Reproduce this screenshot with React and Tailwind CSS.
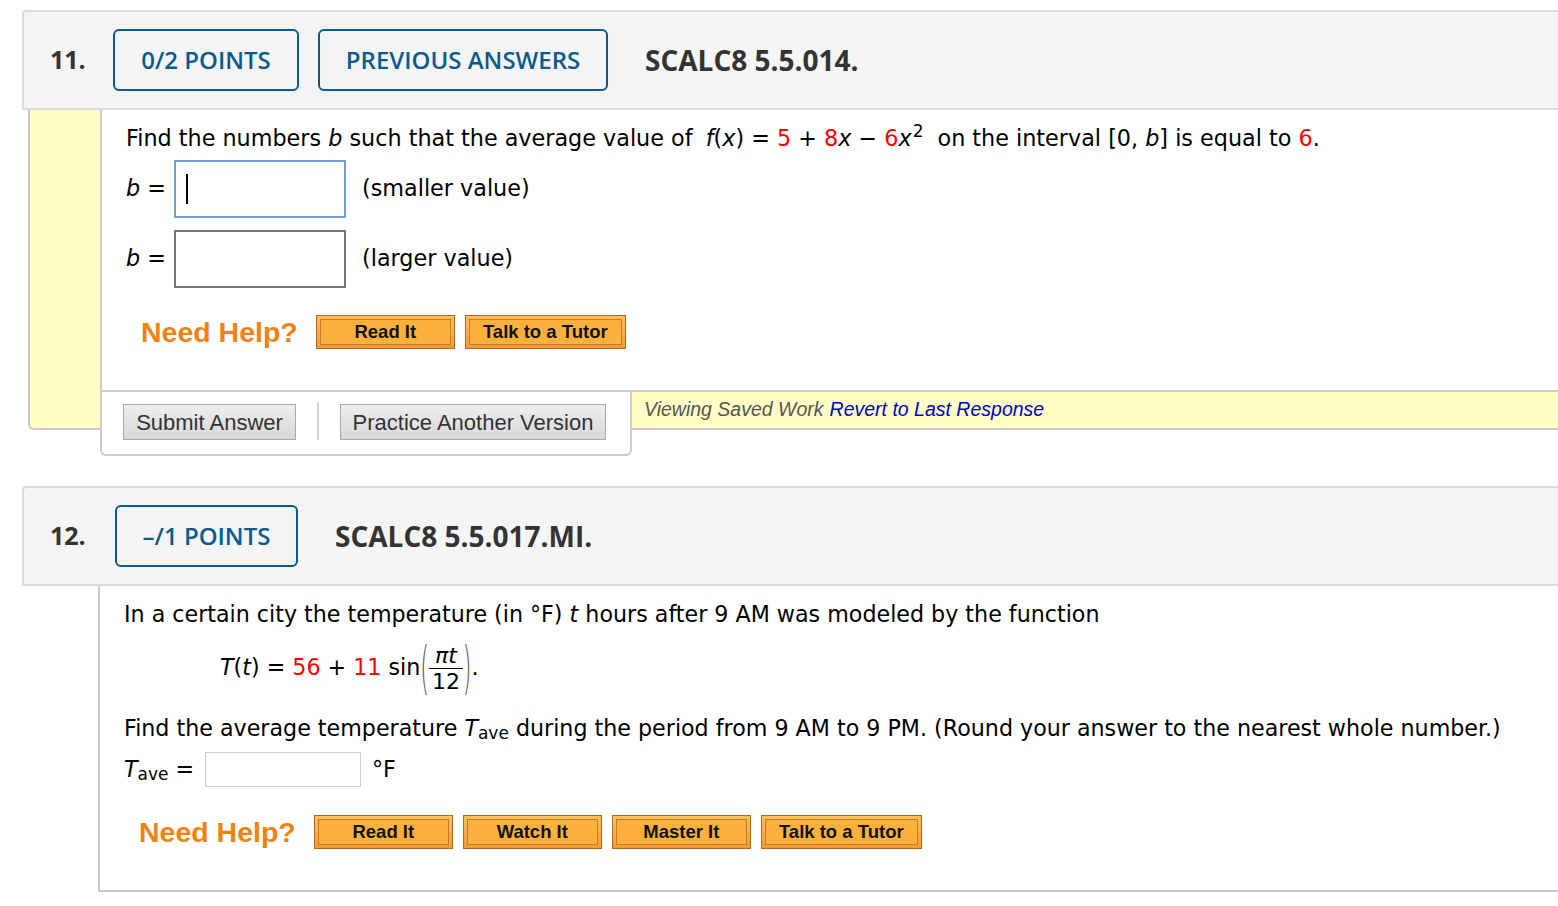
import React from "react";

export default function App() {
  return (
    <div className="min-h-screen bg-white overflow-hidden pt-[10px] text-black antialiased">
      {/* Question 11 */}
      <section className="ml-[22px] w-[1600px]">
        <Header
          num="11."
          numWidth="w-[63px]"
          badges={[
            { text: "0/2 POINTS", w: "w-[186px]" },
            { text: "PREVIOUS ANSWERS", w: "w-[290px]" },
          ]}
          code="SCALC8 5.5.014."
        />
        <div className="ml-[6px] bg-[#ffffc6] border-l-2 border-b-2 border-[#c9c9c9] rounded-bl-[6px]">
          <div className="ml-[70px] bg-white border-l-2 border-b-2 border-[#cccccc] pl-[24px] pt-[14px] pb-[41px] font-['DejaVu_Sans',Verdana,sans-serif] text-[22.3px]">
            <p className="leading-[28px]">
              Find the numbers <i>b</i> such that the average value of{" "}
              <span className="ml-[6px]">
                <i>f</i>(<i>x</i>) = <Red>5</Red> + <Red>8</Red>
                <i>x</i> − <Red>6</Red>
                <i>x</i>
                <sup className="text-[17px] ml-[1px] relative -top-[9px]">2</sup>
              </span>
              <span className="ml-[14px]">
                on the interval [0, <i>b</i>] is equal to <Red>6</Red>.
              </span>
            </p>
            <div className="mt-[8px] flex items-center">
              <span className="w-[48px]">
                <i>b</i> =
              </span>
              <div className="w-[172px] h-[58px] border-2 border-[#6f9fd0] flex items-center pl-[10px]">
                <span className="w-[2px] h-[30px] bg-black" />
              </div>
              <span className="ml-[16px]">(smaller value)</span>
            </div>
            <div className="mt-[12px] flex items-center">
              <span className="w-[48px]">
                <i>b</i> =
              </span>
              <div className="w-[172px] h-[58px] border-2 border-[#777777]" />
              <span className="ml-[16px]">(larger value)</span>
            </div>
            <NeedHelp items={["Read It", "Talk to a Tutor"]} className="mt-[27px] ml-[15px]" />
          </div>

          <div className="flex items-start">
            <div className="ml-[70px] w-[532px] h-[64px] -mb-[28px] bg-white border-x-2 border-b-2 border-[#cccccc] rounded-b-[6px] flex items-start pt-[12px] pl-[21px] font-['Liberation_Sans',Arial,sans-serif]">
              <GrayButton w="w-[173px]">Submit Answer</GrayButton>
              <span className="mx-[21px] mt-[-2px] w-[2px] h-[38px] bg-[#d4d4d4]" />
              <GrayButton w="w-[266px]">Practice Another Version</GrayButton>
            </div>
            <div className="h-[36px] flex items-center pl-[12px] font-['Liberation_Sans',Arial,sans-serif] italic text-[19.5px]">
              <span className="text-[#555555]">Viewing Saved Work</span>
              <span className="ml-[6px] text-[#0000c8]">Revert to Last Response</span>
            </div>
          </div>
        </div>
      </section>

      {/* Question 12 */}
      <section className="ml-[22px] w-[1600px] mt-[56px]">
        <Header
          num="12."
          numWidth="w-[65px]"
          badges={[{ text: "–/1 POINTS", w: "w-[183px]" }]}
          code="SCALC8 5.5.017.MI."
        />
        <div className="ml-[76px] bg-white border-l-2 border-b-2 border-[#cccccc] pl-[24px] pt-[14px] pb-[41px] font-['DejaVu_Sans',Verdana,sans-serif] text-[22.2px]">
          <p className="leading-[28px]">
            In a certain city the temperature (in °F) <i>t</i> hours after 9 AM was modeled by the
            function
          </p>
          <div className="mt-[12px] h-[56px] ml-[96px] flex items-center">
            <span>
              <i>T</i>(<i>t</i>) = <Red>56</Red> + <Red>11</Red> sin
            </span>
            <span className="inline-block scale-y-[2.6] text-[#555] font-extralight">(</span>
            <span className="inline-flex flex-col items-center text-[22px] leading-[25px]">
              <span className="px-[6px] border-b border-black">
                <i>πt</i>
              </span>
              <span className="px-[2px]">12</span>
            </span>
            <span className="inline-block scale-y-[2.6] text-[#555] font-extralight">)</span>
            <span>.</span>
          </div>
          <p className="mt-[18px] leading-[28px]">
            Find the average temperature <Tave /> during the period from 9 AM to 9 PM. (Round your
            answer to the nearest whole number.)
          </p>
          <div className="mt-[10px] flex items-center">
            <span className="w-[81px]">
              <Tave /> =
            </span>
            <div className="w-[156px] h-[35px] border border-[#cccccc]" />
            <span className="ml-[11px]">°F</span>
          </div>
          <NeedHelp
            items={["Read It", "Watch It", "Master It", "Talk to a Tutor"]}
            className="mt-[28px] ml-[15px]"
          />
        </div>
      </section>
    </div>
  );
}

function Header({ num, numWidth, badges, code }) {
  return (
    <div className="h-[100px] bg-[#f5f5f5] border-2 border-r-0 border-[#dadada] rounded-tl-[4px] flex items-center pl-[26px] font-['Open_Sans',sans-serif]">
      <span className={`${numWidth} text-[25px] font-bold text-[#333333]`}>{num}</span>
      <div className="flex gap-[19px]">
        {badges.map((b) => (
          <span
            key={b.text}
            className={`${b.w} h-[62px] flex items-center justify-center border-2 border-[#0a5a8e] rounded-[6px] text-[24px] font-semibold text-[#0a5a8e]`}
          >
            {b.text}
          </span>
        ))}
      </div>
      <span className="ml-[37px] text-[28px] font-bold text-[#333333]">{code}</span>
    </div>
  );
}

function NeedHelp({ items, className }) {
  return (
    <div className={`flex items-center h-[34px] ${className}`}>
      <span className="font-['Liberation_Sans',Arial,sans-serif] font-bold text-[28.5px] leading-none text-[#f0820f] mr-[18px]">
        Need Help?
      </span>
      <div className="flex gap-[10px]">
        {items.map((t) => (
          <button
            key={t}
            className={`${t === "Talk to a Tutor" ? "w-[161px]" : "w-[139px]"} h-[34px] p-[3px] bg-linear-to-b from-[#fcc15e] to-[#f49a2c] border border-[#b8661f]`}
          >
            <span className="h-full w-full flex items-center justify-center border border-[#c57a2f] bg-[#fdb13d] font-['Liberation_Sans',Arial,sans-serif] font-bold text-[18.5px] leading-none text-[#111111]">
              {t}
            </span>
          </button>
        ))}
      </div>
    </div>
  );
}

function GrayButton({ w, children }) {
  return (
    <button
      className={`${w} h-[36px] bg-linear-to-b from-[#eeeeee] to-[#d8d8d8] border border-[#a9a9a9] text-[22px] text-[#333333] flex items-center justify-center`}
    >
      {children}
    </button>
  );
}

function Red({ children }) {
  return <span className="text-[#ff0000]">{children}</span>;
}

function Tave() {
  return (
    <span>
      <i>T</i>
      <sub className="text-[17px] relative top-[3px]">ave</sub>
    </span>
  );
}
